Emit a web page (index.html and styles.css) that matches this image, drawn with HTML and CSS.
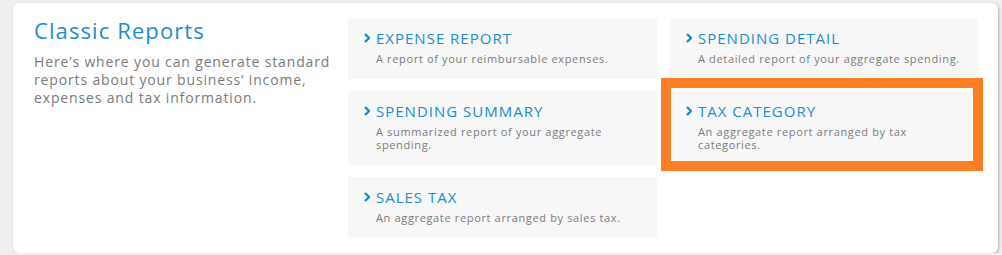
FILE: index.html
```html
<!DOCTYPE html>
<html>
<head>
<meta charset="utf-8">
<link rel="stylesheet" href="styles.css">
</head>
<body>
<div class="card">
  <div class="intro">
    <h1 class="title">Classic Reports</h1>
    <p class="lead">Here’s where you can generate standard reports about your business’ income, expenses and tax information.</p>
  </div>
  <div class="tiles">
    <div class="tile">
      <div class="tile-title"><svg class="chev" viewBox="0 0 6 10" width="6" height="10"><polyline points="1,1 5,5 1,9"/></svg>EXPENSE REPORT</div>
      <div class="tile-desc">A report of your reimbursable expenses.</div>
    </div>
    <div class="tile">
      <div class="tile-title"><svg class="chev" viewBox="0 0 6 10" width="6" height="10"><polyline points="1,1 5,5 1,9"/></svg>SPENDING DETAIL</div>
      <div class="tile-desc">A detailed report of your aggregate spending.</div>
    </div>
    <div class="tile">
      <div class="tile-title"><svg class="chev" viewBox="0 0 6 10" width="6" height="10"><polyline points="1,1 5,5 1,9"/></svg>SPENDING SUMMARY</div>
      <div class="tile-desc">A summarized report of your aggregate<br>spending.</div>
    </div>
    <div class="tile highlighted">
      <div class="tile-title"><svg class="chev" viewBox="0 0 6 10" width="6" height="10"><polyline points="1,1 5,5 1,9"/></svg>TAX CATEGORY</div>
      <div class="tile-desc">An aggregate report arranged by tax<br>categories.</div>
      <div class="highlight-box"></div>
    </div>
    <div class="tile">
      <div class="tile-title"><svg class="chev" viewBox="0 0 6 10" width="6" height="10"><polyline points="1,1 5,5 1,9"/></svg>SALES TAX</div>
      <div class="tile-desc">An aggregate report arranged by sales tax.</div>
    </div>
  </div>
</div>
</body>
</html>
```
FILE: styles.css
```css
html, body {
  margin: 0;
  padding: 0;
  background: #efefef;
  font-family: "Open Sans", "DejaVu Sans", sans-serif;
}
.card {
  margin: 3px 4px 0 13px;
  height: 250px;
  box-sizing: border-box;
  background: #fff;
  border-radius: 6px;
  box-shadow: 1px 1px 3px rgba(0,0,0,0.25);
  display: flex;
  padding: 15px 20px 14px 21px;
}
.intro {
  width: 314px;
  flex: none;
}
.title {
  margin: 0;
  font-size: 22px;
  line-height: 24px;
  font-weight: 400;
  color: #1a8dd0;
  letter-spacing: 1.1px;
}
.lead {
  margin: 11px 0 0;
  font-size: 14px;
  line-height: 18px;
  color: #7a7a7a;
  letter-spacing: 0.85px;
  width: 300px;
}
.tiles {
  display: grid;
  grid-template-columns: 309px 308px;
  column-gap: 13px;
  row-gap: 12px;
  align-content: start;
}
.tile {
  position: relative;
  background: #f7f7f7;
  padding: 10px 10px 14px 16px;
}
.tile-title {
  display: flex;
  align-items: center;
  font-size: 15px;
  line-height: 20px;
  color: #1a8dd0;
  letter-spacing: 1px;
}
.chev {
  width: 6px;
  height: 10px;
  margin-right: 6px;
  fill: none;
  stroke: #1a8dd0;
  stroke-width: 2.4;
}
.tile-desc {
  margin: 4px 0 0 12px;
  font-size: 11px;
  line-height: 13px;
  color: #7b7b7b;
  letter-spacing: 0.65px;
}
.highlight-box {
  position: absolute;
  top: -13px;
  left: -9px;
  right: -5px;
  bottom: -6px;
  border: 10px solid #fd7f25;
  pointer-events: none;
}
```
